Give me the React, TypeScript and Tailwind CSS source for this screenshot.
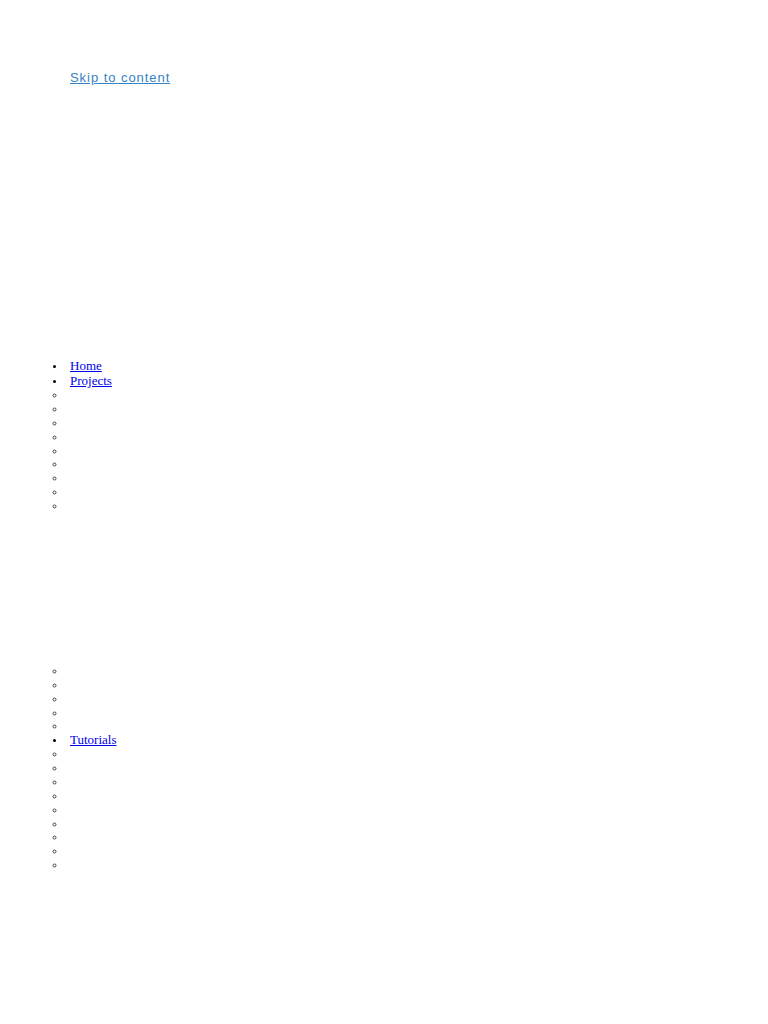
const EMPTY_A = 9;
const EMPTY_B = 5;
const EMPTY_C = 9;

function Empty({ n }: { n: number }) {
  return (
    <>
      {Array.from({ length: n }).map((_, i) => (
        <li key={i} className="list-[circle] pl-1 h-[13.875px] leading-[12px] marker:text-[11px] marker:text-[#444]" />
      ))}
    </>
  );
}

export default function App() {
  return (
    <div className="min-h-[1024px] bg-white pl-[30px] font-['Liberation_Serif',serif] text-[13px] text-black">
      <div className="pl-10 pt-[68px] h-[85px]">
        <a
          href="#content"
          className="font-['Liberation_Sans',Arial,sans-serif] text-[13px] leading-[16px] tracking-[0.95px] text-[#3582c4] underline"
        >
          Skip to content
        </a>
      </div>
      <ul className="mt-[273px] list-disc pl-9 marker:text-[10px]">
        <li className="pl-1 leading-[15px]">
          <a href="#" className="text-[#0000ee] underline">Home</a>
        </li>
        <li className="pl-1 leading-[15px]">
          <a href="#" className="text-[#0000ee] underline">Projects</a>
        </li>
        <Empty n={EMPTY_A} />
        <li className="h-[151px] list-none" />
        <Empty n={EMPTY_B} />
        <li className="pl-1 leading-[13.875px]">
          <a href="#" className="text-[#0000ee] underline">Tutorials</a>
        </li>
        <Empty n={EMPTY_C} />
      </ul>
    </div>
  );
}
